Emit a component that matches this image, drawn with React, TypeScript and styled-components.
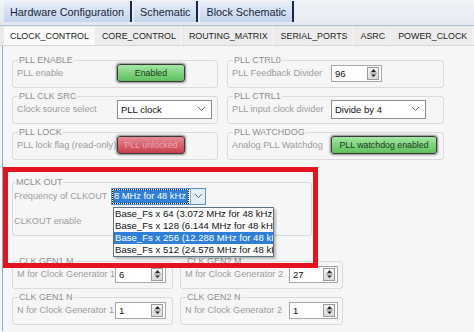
import React from "react";
import styled, { createGlobalStyle } from "styled-components";

const GlobalStyle = createGlobalStyle`
  html, body {
    margin: 0;
    padding: 0;
    background: #f6f6f6;
    overflow: hidden;
  }
  * {
    box-sizing: border-box;
  }
`;

const Chevron: React.FC = () => (
  <svg width="9" height="6" viewBox="0 0 9 6">
    <path d="M1 1 L4.5 4.5 L8 1" fill="none" stroke="#666" strokeWidth="1" />
  </svg>
);

const SpinArrows: React.FC = () => (
  <svg width="9" height="12" viewBox="0 0 9 12">
    <path d="M4.5 2 L7 5 L2 5 Z" fill="#222" />
    <line x1="1" y1="6" x2="8" y2="6" stroke="#8a8a8a" strokeWidth="1" />
    <path d="M2 7.5 L7 7.5 L4.5 10 Z" fill="#222" />
  </svg>
);

const topTabs = ["Hardware Configuration", "Schematic", "Block Schematic"];
const subTabs = [
  "CLOCK_CONTROL",
  "CORE_CONTROL",
  "ROUTING_MATRIX",
  "SERIAL_PORTS",
  "ASRC",
  "POWER_CLOCK",
];
const clkOptions = [
  "Base_Fs x 64 (3.072 MHz for 48 kHz)",
  "Base_Fs x 128 (6.144 MHz for 48 kHz)",
  "Base_Fs x 256 (12.288 MHz for 48 kHz)",
  "Base_Fs x 512 (24.576 MHz for 48 kHz)",
];

const App: React.FC = () => {
  return (
    <Window>
      <GlobalStyle />
      <TopBar>
        {topTabs.map((t) => (
          <TopTab key={t}>{t}</TopTab>
        ))}
      </TopBar>
      <SubBar>
        {subTabs.map((t, i) => (
          <SubTab key={t} $active={i === 0}>
            {t}
          </SubTab>
        ))}
      </SubBar>
      <Panel>
        <UpperGrid>
          <Column>
            <Group>
              <Legend>PLL ENABLE</Legend>
              <Row>
                <Label $w={100}>PLL enable</Label>
                <StatusButton $tone="green" $w={68}>
                  Enabled
                </StatusButton>
              </Row>
            </Group>
            <Group>
              <Legend>PLL CLK SRC</Legend>
              <Row>
                <Label $w={100}>Clock source select</Label>
                <Select>
                  <span>PLL clock</span>
                  <Chevron />
                </Select>
              </Row>
            </Group>
            <Group>
              <Legend>PLL LOCK</Legend>
              <Row>
                <Label $w={100}>PLL lock flag (read-only)</Label>
                <StatusButton $tone="red" $w={68}>
                  PLL unlocked
                </StatusButton>
              </Row>
            </Group>
          </Column>
          <Column>
            <Group>
              <Legend>PLL CTRL0</Legend>
              <Row>
                <Label $w={99}>PLL Feedback Divider</Label>
                <Spin>
                  <span>96</span>
                  <SpinButton>
                    <SpinArrows />
                  </SpinButton>
                </Spin>
              </Row>
            </Group>
            <Group>
              <Legend>PLL CTRL1</Legend>
              <Row>
                <Label $w={99}>PLL input clock divider</Label>
                <Select>
                  <span>Divide by 4</span>
                  <Chevron />
                </Select>
              </Row>
            </Group>
            <Group>
              <Legend>PLL WATCHDOG</Legend>
              <Row>
                <Label $w={99}>Analog PLL Watchdog</Label>
                <StatusButton $tone="green" $w={106}>
                  PLL watchdog enabled
                </StatusButton>
              </Row>
            </Group>
          </Column>
        </UpperGrid>

        <MclkGroup>
          <Legend>MCLK OUT</Legend>
          <TallRow>
            <Label $w={97}>Frequency of CLKOUT</Label>
            <Combo>
              <ComboText>8 MHz for 48 kHz</ComboText>
              <ComboButton>
                <Chevron />
              </ComboButton>
            </Combo>
          </TallRow>
          <TallRow>
            <Label $w={97}>CLKOUT enable</Label>
          </TallRow>
        </MclkGroup>

        <LowerGrid>
          <Column>
            <Group>
              <Legend>CLK GEN1 M</Legend>
              <Row>
                <Label $w={98}>M for Clock Generator 1</Label>
                <Spin>
                  <span>6</span>
                  <SpinButton>
                    <SpinArrows />
                  </SpinButton>
                </Spin>
              </Row>
            </Group>
            <Group>
              <Legend>CLK GEN1 N</Legend>
              <Row>
                <Label $w={98}>N for Clock Generator 1</Label>
                <Spin>
                  <span>1</span>
                  <SpinButton>
                    <SpinArrows />
                  </SpinButton>
                </Spin>
              </Row>
            </Group>
          </Column>
          <Column>
            <Group>
              <Legend>CLK GEN2 M</Legend>
              <Row>
                <Label $w={104}>M for Clock Generator 2</Label>
                <Spin>
                  <span>27</span>
                  <SpinButton>
                    <SpinArrows />
                  </SpinButton>
                </Spin>
              </Row>
            </Group>
            <Group>
              <Legend>CLK GEN2 N</Legend>
              <Row>
                <Label $w={104}>N for Clock Generator 2</Label>
                <Spin>
                  <span>1</span>
                  <SpinButton>
                    <SpinArrows />
                  </SpinButton>
                </Spin>
              </Row>
            </Group>
          </Column>
        </LowerGrid>
      </Panel>

      <Highlight />
      <DropList>
        {clkOptions.map((o, i) => (
          <DropItem key={o} $selected={i === 2}>
            {o}
          </DropItem>
        ))}
      </DropList>
    </Window>
  );
};

const Window = styled.div`
  position: relative;
  width: 474px;
  height: 332px;
  overflow: hidden;
  background: #f6f6f6;
  font-family: "Liberation Sans", Arial, sans-serif;
`;

const TopBar = styled.div`
  display: flex;
  align-items: flex-end;
  height: 26px;
  padding: 0 0 3px 4px;
  background: linear-gradient(#f0f3f7, #e3e9f1);
  border-bottom: 1px solid #aebfd6;
`;

const TopTab = styled.div`
  display: flex;
  align-items: center;
  height: 21px;
  padding: 0 6px 0 6px;
  margin-right: 2px;
  font-size: 10.8px;
  color: #16243d;
  background: linear-gradient(#e7eef8, #c2d5ed);
  border-right: 2px solid #17284c;
`;

const SubBar = styled.div`
  display: flex;
  align-items: flex-end;
  height: 20px;
  padding-left: 4px;
  background: #e9e9e9;
  border-bottom: 1px solid #d6d6d6;
`;

const SubTab = styled.div<{ $active?: boolean }>`
  display: flex;
  align-items: center;
  height: 18px;
  padding: 0 5px 0 6px;
  margin-right: 1px;
  font-size: 8.9px;
  color: #222;
  white-space: nowrap;
  background: ${(p) => (p.$active ? "#fafafa" : "#ececec")};
  border-right: 1px solid #f7f7f7;
`;

const Panel = styled.div`
  display: flex;
  flex-direction: column;
  padding: 9px 0 0 9px;
  margin-left: 2px;
  border-left: 1px solid #8fa9cc;
  min-height: 285px;
`;

const UpperGrid = styled.div`
  display: grid;
  grid-template-columns: 206px 217px;
  column-gap: 9px;
`;

const LowerGrid = styled.div`
  display: grid;
  grid-template-columns: 161px 163px;
  column-gap: 7px;
  margin-top: 20px;
`;

const Column = styled.div`
  display: flex;
  flex-direction: column;
  gap: 3px;
`;

const Group = styled.fieldset`
  flex-shrink: 0;
  margin: 0;
  min-width: 0;
  padding: 0 4px 3px 4px;
  border: 1px solid #dadada;
  border-radius: 3px;
`;

const MclkGroup = styled(Group)`
  width: 300px;
  margin-top: 17px;
  padding: 0 2px 5px 1px;
`;

const Legend = styled.legend`
  padding: 0 1px;
  margin-left: 1px;
  font-size: 9px;
  line-height: 10px;
  color: #8d8d8d;
`;

const Row = styled.div`
  display: flex;
  align-items: center;
  height: 22px;
  margin-top: -3px;
`;

const TallRow = styled.div`
  display: flex;
  align-items: center;
  height: 18px;
  margin-bottom: 7px;

  &:last-child {
    margin-bottom: 0;
  }
`;

const Label = styled.div<{ $w: number }>`
  width: ${(p) => p.$w}px;
  flex-shrink: 0;
  font-size: 9.2px;
  color: #9b9b9b;
  white-space: nowrap;
  overflow: hidden;
`;

const StatusButton = styled.div<{ $tone: "green" | "red"; $w: number }>`
  display: flex;
  align-items: center;
  justify-content: center;
  width: ${(p) => p.$w}px;
  height: 18px;
  border-radius: 3px;
  font-size: 8.8px;
  border: 1px solid #3a3a3a;
  box-shadow: 0 0 2px 1px rgba(40, 40, 40, 0.55);
  color: ${(p) => (p.$tone === "green" ? "#1d351d" : "#eea3aa")};
  background: ${(p) =>
    p.$tone === "green"
      ? "linear-gradient(#a4e6a4, #5cc15c)"
      : "linear-gradient(#e58a92, #c6414c)"};
`;

const Select = styled.div`
  display: flex;
  align-items: center;
  justify-content: space-between;
  width: 95px;
  height: 19px;
  padding: 0 5px 0 3px;
  background: #fff;
  border: 1px solid #8c8c8c;
  font-size: 9.5px;
  color: #111;
`;

const Spin = styled.div`
  display: flex;
  align-items: center;
  justify-content: space-between;
  width: 51px;
  height: 17px;
  padding: 0 2px 0 3px;
  background: #fff;
  border: 1px solid #a6a6a6;
  font-size: 9.5px;
  color: #111;
`;

const SpinButton = styled.div`
  display: flex;
  align-items: center;
  justify-content: center;
  width: 12px;
  height: 13px;
  border: 1px solid #9a9a9a;
  background: linear-gradient(#f6f6f6, #d9d9d9);
`;

const Combo = styled.div`
  display: flex;
  align-items: stretch;
  width: 95px;
  height: 17px;
  background: #fff;
  border: 1px solid #5a8fc8;
`;

const ComboText = styled.div`
  flex: 1;
  margin: 1px 2px 1px 1px;
  padding-left: 1px;
  display: flex;
  align-items: center;
  font-size: 9.3px;
  color: #fff;
  background: #2f7fd8;
  outline: 1px dotted #1a1a1a;
  white-space: nowrap;
  overflow: hidden;
`;

const ComboButton = styled.div`
  display: flex;
  align-items: center;
  justify-content: center;
  width: 15px;
  background: #e3eef9;
  border-left: 1px solid #7eb0e2;
`;

const Highlight = styled.div`
  position: absolute;
  left: 3px;
  top: 167px;
  width: 315px;
  height: 101px;
  border: 5px solid #e5141c;
  pointer-events: none;
`;

const DropList = styled.div`
  position: absolute;
  left: 113px;
  top: 207px;
  width: 161px;
  display: flex;
  flex-direction: column;
  background: #fff;
  border: 1px solid #5f6f86;
  box-shadow: 2px 2px 2px rgba(0, 0, 0, 0.25);
  overflow: hidden;
`;

const DropItem = styled.div<{ $selected?: boolean }>`
  height: 12px;
  line-height: 12px;
  padding-left: 1px;
  font-size: 9.6px;
  white-space: nowrap;
  color: ${(p) => (p.$selected ? "#fff" : "#111")};
  background: ${(p) => (p.$selected ? "#2f7fd8" : "transparent")};
`;

export default App;
